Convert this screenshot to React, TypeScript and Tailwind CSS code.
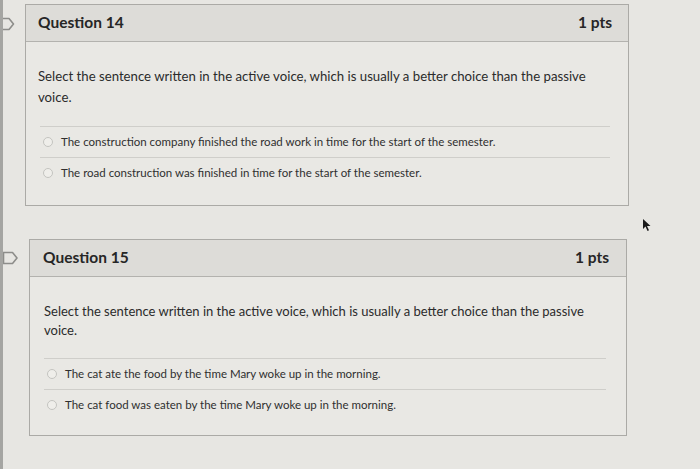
import React from "react";

type Question = {
  title: string;
  prompt: string;
  options: string[];
};

const questions: Question[] = [
  {
    title: "Question 14",
    prompt:
      "Select the sentence written in the active voice, which is usually a better choice than the passive voice.",
    options: [
      "The construction company finished the road work in time for the start of the semester.",
      "The road construction was finished in time for the start of the semester.",
    ],
  },
  {
    title: "Question 15",
    prompt:
      "Select the sentence written in the active voice, which is usually a better choice than the passive voice.",
    options: [
      "The cat ate the food by the time Mary woke up in the morning.",
      "The cat food was eaten by the time Mary woke up in the morning.",
    ],
  },
];

// flag-shaped marker in the left gutter
const Bookmark = ({ className }: { className?: string }) => (
  <svg viewBox="0 0 16 14" className={className} fill="none">
    <path
      d="M1 1.5 H10 L14.5 7 L10 12.5 H1 Z"
      stroke="#8d8d8a"
      strokeWidth="1.6"
      strokeLinejoin="round"
    />
  </svg>
);

const Radio = () => (
  <span className="inline-block h-[10px] w-[10px] shrink-0 rounded-full border border-[#c4c4c0] bg-[#efeeea]" />
);

const QuestionCard = ({
  q,
  className,
  titleClass,
  bodyClass,
  promptClass,
  optionsClass,
}: {
  q: Question;
  className: string;
  titleClass: string;
  bodyClass: string;
  promptClass: string;
  optionsClass: string;
}) => (
  <div className={`flex flex-col border border-[#abaaa6] bg-[#e9e8e4] ${className}`}>
    <div className={`flex h-[37px] shrink-0 items-center justify-between border-b border-[#b3b2ae] bg-[#dddcd8] ${titleClass}`}>
      <span className="text-[15.5px] font-bold text-[#262626]">{q.title}</span>
      <span className="text-[15.5px] font-bold text-[#262626]">1 pts</span>
    </div>
    <div className={bodyClass}>
      <p className={`text-[#2b2b2b] ${promptClass}`}>{q.prompt}</p>
      <div className={optionsClass}>
        {q.options.map((opt) => (
          <div
            key={opt}
            className="flex h-[31px] items-center gap-[8px] border-t border-[#cfceca] pl-[3px]"
          >
            <Radio />
            <span className="text-[11.5px] text-[#2f2f2f]">{opt}</span>
          </div>
        ))}
      </div>
    </div>
  </div>
);

export default function App() {
  return (
    <div className="relative h-[469px] w-[700px] overflow-hidden border-l-[3px] border-[#a5a5a2] bg-[#e7e6e2] font-['Lato','Noto_Sans',sans-serif]">
      <div className="flex flex-col">
        <div className="flex items-start">
          <Bookmark className="mt-[17px] ml-[-4px] h-[14px] w-[16px] shrink-0" />
          <QuestionCard
            q={questions[0]}
            className="mt-[4px] ml-[10px] h-[202px] w-[604px]"
            titleClass="pl-[12px] pr-[16px]"
            bodyClass="px-[12px] pt-[24px]"
            promptClass="text-[13.2px] leading-[21px]"
            optionsClass="mt-[18px] ml-[2px] mr-[6px]"
          />
        </div>
        <div className="flex items-start">
          <Bookmark className="mt-[45px] ml-[-1px] h-[14px] w-[17px] shrink-0" />
          <QuestionCard
            q={questions[1]}
            className="mt-[33px] ml-[10px] h-[197px] w-[598px]"
            titleClass="pl-[13px] pr-[17px]"
            bodyClass="px-[14px] pt-[25px]"
            promptClass="text-[13px] leading-[19px]"
            optionsClass="mt-[18px] ml-[0px] mr-[6px]"
          />
        </div>
      </div>
      {/* mouse pointer */}
      <svg
        viewBox="0 0 10 14"
        className="absolute left-[639px] top-[218px] h-[14px] w-[10px]"
      >
        <path d="M1 1 L1 11 L3.5 8.5 L5.5 13 L7 12.3 L5 8 L8.5 8 Z" fill="#1a1a1a" />
      </svg>
    </div>
  );
}
